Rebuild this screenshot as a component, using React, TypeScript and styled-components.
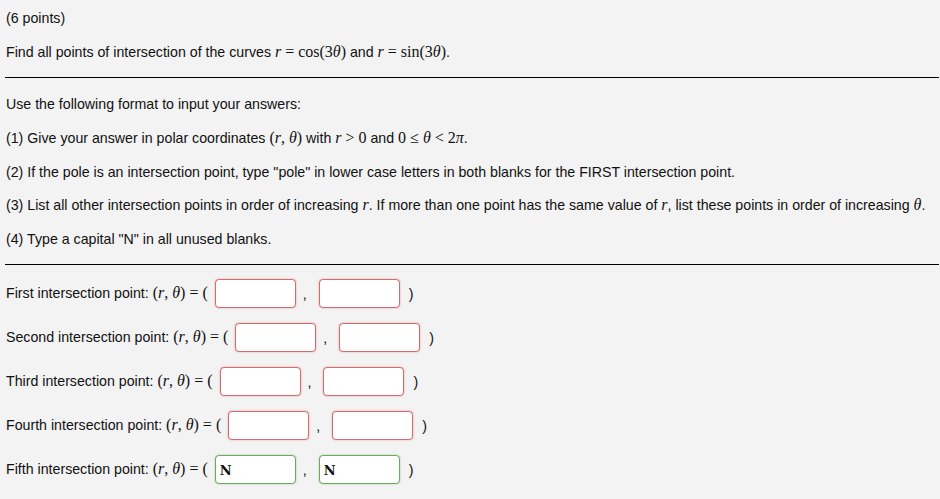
import React from "react";
import styled, { createGlobalStyle } from "styled-components";

const GlobalStyle = createGlobalStyle`
  html, body {
    margin: 0;
    padding: 0;
    background: #f3f3f3;
  }
  body {
    font-family: "Liberation Sans", Arial, sans-serif;
    font-size: 14.2px;
    color: #111;
  }
`;

const Page = styled.div`
  padding: 10px 0 30px 6px;
  overflow: hidden;
`;

const Para = styled.p`
  margin: 0;
  line-height: 17px;
  white-space: nowrap;
`;

const Intro = styled.div`
  display: flex;
  flex-direction: column;
  gap: 17px;
`;

const Rule = styled.hr<{ $top: number; $bottom: number }>`
  border: 0;
  border-top: 1px solid #000;
  margin: ${(p) => p.$top}px 0 ${(p) => p.$bottom}px -1px;
  width: 100%;
`;

const Steps = styled.div`
  display: flex;
  flex-direction: column;
  gap: 16.75px;
`;

const M = styled.span`
  font-family: "Liberation Serif", "Times New Roman", serif;
  font-size: 16px;
  line-height: 1;
`;

const V = styled.i`
  font-family: "Liberation Serif", "Times New Roman", serif;
  font-style: italic;
  font-size: 16px;
  line-height: 1;
`;

const Op = styled.span`
  font-family: "Liberation Serif", "Times New Roman", serif;
  font-size: 16px;
  line-height: 1;
  margin: 0 4px;
`;

const Answers = styled.div`
  display: flex;
  flex-direction: column;
  gap: 15px;
`;

const Row = styled.div`
  display: flex;
  align-items: center;
  height: 29px;
  white-space: nowrap;
`;

const Label = styled.span`
  white-space: pre;
  line-height: 17px;
`;

const Field = styled.input<{ $ok?: boolean }>`
  box-sizing: border-box;
  width: 81px;
  height: 29px;
  margin: 0 0 0 7px;
  padding: 2px 4px 0;
  border: 1px solid ${(p) => (p.$ok ? "#6aaa5e" : "#d46a6a")};
  border-radius: 4px;
  background: #fff;
  box-shadow: 0 0 2px ${(p) => (p.$ok ? "rgba(90,170,80,0.55)" : "rgba(210,90,90,0.55)")};
  font-family: "DejaVu Serif", "Liberation Serif", serif;
  font-weight: bold;
  font-size: 13px;
  color: #111;
  outline: none;
`;

const Comma = styled.span`
  margin: 0 5px 0 7px;
`;

const Close = styled.span`
  margin-left: 9px;
`;

const ordinals = ["First", "Second", "Third", "Fourth", "Fifth"];

function Pair() {
  return (
    <>
      <M>(</M>
      <V>r</V>
      <M>, </M>
      <V>θ</V>
      <M>)</M>
    </>
  );
}

export default function App() {
  return (
    <>
      <GlobalStyle />
      <Page>
        <Intro>
          <Para>(6 points)</Para>
          <Para>
            Find all points of intersection of the curves <V>r</V>
            <Op>=</Op>
            <M>cos(3</M>
            <V>θ</V>
            <M>)</M> and <V>r</V>
            <Op>=</Op>
            <M>sin(3</M>
            <V>θ</V>
            <M>)</M>.
          </Para>
        </Intro>
        <Rule $top={16} $bottom={18} />
        <Steps>
          <Para>Use the following format to input your answers:</Para>
          <Para>
            (1) Give your answer in polar coordinates <Pair /> with <V>r</V>
            <Op>&gt;</Op>
            <M>0</M> and <M>0</M>
            <Op>≤</Op>
            <V>θ</V>
            <Op>&lt;</Op>
            <M>2</M>
            <V>π</V>.
          </Para>
          <Para>
            (2) If the pole is an intersection point, type "pole" in lower case letters in both blanks for
            the FIRST intersection point.
          </Para>
          <Para>
            (3) List all other intersection points in order of increasing <V>r</V>. If more than one point
            has the same value of <V>r</V>, list these points in order of increasing <V>θ</V>.
          </Para>
          <Para>(4) Type a capital "N" in all unused blanks.</Para>
        </Steps>
        <Rule $top={15.5} $bottom={14.5} />
        <Answers>
          {ordinals.map((o, i) => {
            const filled = i === 4;
            return (
              <Row key={o}>
                <Label>
                  {o} intersection point: <Pair />
                  <Op>=</Op>
                  <M>(</M>
                </Label>
                <Field $ok={filled} defaultValue={filled ? "N" : ""} />
                <Comma>,</Comma>
                <Field $ok={filled} defaultValue={filled ? "N" : ""} />
                <Close>)</Close>
              </Row>
            );
          })}
        </Answers>
      </Page>
    </>
  );
}
